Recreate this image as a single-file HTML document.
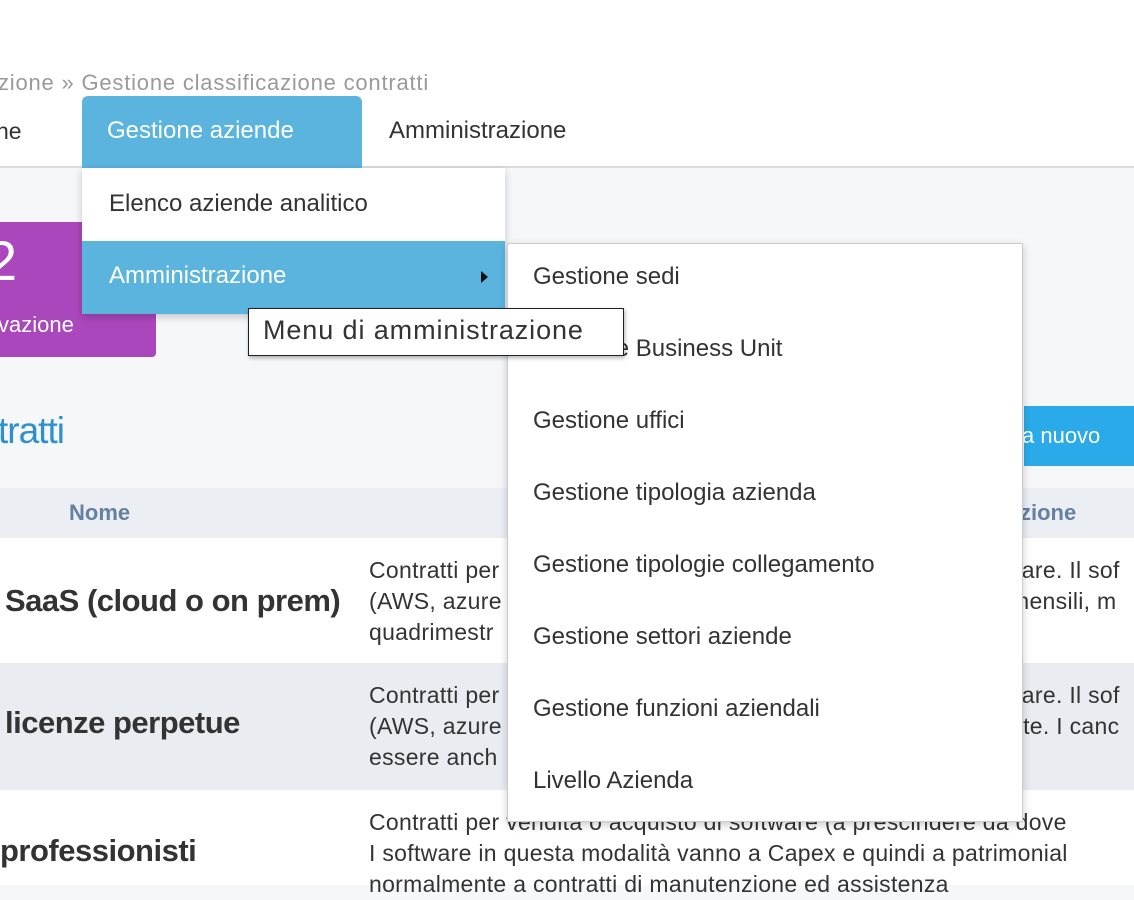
<!DOCTYPE html>
<html><head><meta charset="utf-8"><style>
*{margin:0;padding:0;box-sizing:border-box}
body{width:1134px;height:885px;overflow:hidden;position:relative;background:#f6f7f9;font-family:"Liberation Sans",sans-serif;}
.a{position:absolute;white-space:nowrap}
</style></head><body>
<div class="a" style="left:0;top:0;width:1134px;height:168px;background:#fff;border-bottom:2px solid #dcdcdc"></div>
<div class="a" style="left:-2px;top:70px;font-size:22px;color:#9a9a9a;letter-spacing:0.8px">zione » Gestione classificazione contratti</div>
<div class="a" style="left:-4px;top:118px;font-size:23px;color:#333">ne</div>
<div class="a" style="left:82px;top:96px;width:280px;height:73px;background:#5ab4de;border-radius:6px 6px 0 0"></div>
<div class="a" style="left:107px;top:117px;font-size:24px;color:#fff">Gestione aziende</div>
<div class="a" style="left:389px;top:117px;font-size:24px;color:#333">Amministrazione</div>

<div class="a" style="left:0;top:222px;width:156px;height:135px;background:#ab47bc;border-radius:0 4px 4px 0"></div>
<div class="a" style="left:-14px;top:228px;font-size:56px;color:#fff">2</div>
<div class="a" style="left:-2px;top:312px;font-size:22px;color:#fff">vazione</div>

<div class="a" style="left:-2px;top:410px;font-size:37px;color:#2f8fd0;letter-spacing:-1px">tratti</div>
<div class="a" style="left:1024px;top:406px;width:110px;height:60px;background:#2aaae8"></div>
<div class="a" style="left:1022px;top:423px;font-size:22px;color:#fff">a nuovo</div>

<div class="a" style="left:0;top:488px;width:1134px;height:50px;background:#ebeff4"></div>
<div class="a" style="left:69px;top:500px;font-size:22px;color:#6580a0;font-weight:bold">Nome</div>
<div class="a" style="left:1020px;top:500px;font-size:22px;color:#6580a0;font-weight:bold">zione</div>

<div class="a" style="left:0;top:538px;width:1134px;height:125px;background:#fff"></div>
<div class="a" style="left:0;top:663px;width:1134px;height:127px;background:#e9edf2"></div>
<div class="a" style="left:0;top:790px;width:1134px;height:95px;background:#fff"></div>
<div class="a" style="left:5px;top:583px;font-size:31px;color:#333;font-weight:bold;letter-spacing:-0.5px">SaaS (cloud o on prem)</div>
<div class="a" style="left:5px;top:705px;font-size:31px;color:#333;font-weight:bold;letter-spacing:-0.5px">licenze perpetue</div>
<div class="a" style="left:0;top:833px;font-size:31px;color:#333;font-weight:bold;letter-spacing:-0.5px">professionisti</div>
<div class="a" style="left:369px;top:555px;font-size:23px;line-height:31px;color:#333;letter-spacing:0.3px">Contratti per<br>(AWS, azure<br>quadrimestr</div>
<div class="a" style="left:1010px;top:555px;font-size:23px;line-height:31px;color:#333;letter-spacing:0.3px">vare. Il sof<br>mensili, m</div>
<div class="a" style="left:369px;top:680px;font-size:23px;line-height:31px;color:#333;letter-spacing:0.3px">Contratti per<br>(AWS, azure<br>essere anch</div>
<div class="a" style="left:1010px;top:680px;font-size:23px;line-height:31px;color:#333;letter-spacing:0.3px">vare. Il sof<br>nte. I canc</div>
<div class="a" style="left:369px;top:807px;font-size:23px;line-height:31px;color:#333;letter-spacing:0.3px">Contratti per vendita o acquisto di software (a prescindere da dove<br>I software in questa modalità vanno a Capex e quindi a patrimonial<br>normalmente a contratti di manutenzione ed assistenza</div>

<div class="a" style="left:82px;top:168px;width:423px;height:146px;background:#fff;box-shadow:0 3px 8px rgba(0,0,0,.2)"></div>
<div class="a" style="left:109px;top:190px;font-size:24px;color:#333">Elenco aziende analitico</div>
<div class="a" style="left:82px;top:241px;width:423px;height:73px;background:#5ab4de"></div>
<div class="a" style="left:109px;top:262px;font-size:24px;color:#fff">Amministrazione</div>
<div class="a" style="left:481px;top:271px;width:0;height:0;border-left:7px solid #111;border-top:6px solid transparent;border-bottom:6px solid transparent"></div>

<div class="a" style="left:507px;top:243px;width:516px;height:579px;background:#fff;border:1px solid #ccc;box-shadow:0 3px 8px rgba(0,0,0,.2)"></div>
<div class="a" style="left:533px;top:265px;font-size:24px;line-height:72px;color:#333;margin-top:-24px">Gestione sedi<br>Gestione Business Unit<br>Gestione uffici<br>Gestione tipologia azienda<br>Gestione tipologie collegamento<br>Gestione settori aziende<br>Gestione funzioni aziendali<br>Livello Azienda</div>

<div class="a" style="left:248px;top:308px;width:376px;height:48px;background:#fff;border:1px solid #222;box-shadow:1px 2px 4px rgba(0,0,0,.3)"></div>
<div class="a" style="left:263px;top:315px;font-size:27px;color:#333;letter-spacing:0.9px">Menu di amministrazione</div>
</body></html>
